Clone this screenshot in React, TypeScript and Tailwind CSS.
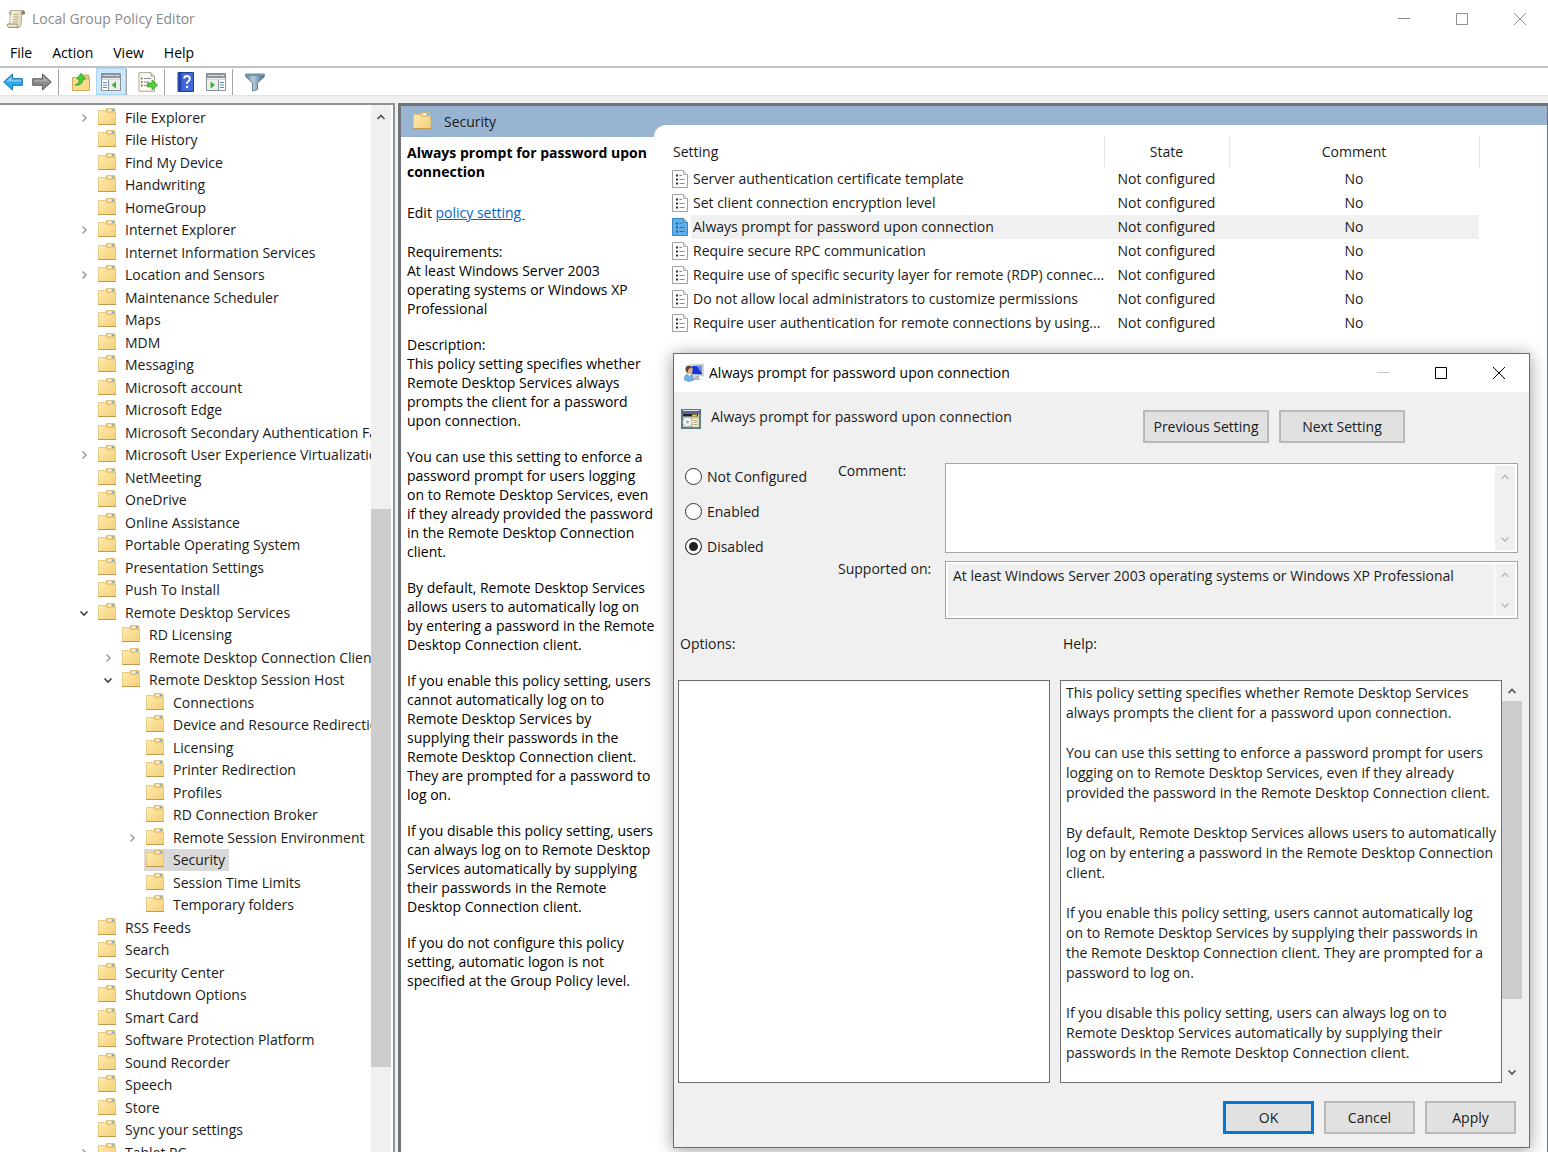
import { ReactNode } from 'react'

type TreeItem = {
  name: string
  level?: number
  state?: 'closed' | 'open'
  selected?: boolean
}

const tree: TreeItem[] = [
  { name: 'File Explorer', state: 'closed' },
  { name: 'File History' },
  { name: 'Find My Device' },
  { name: 'Handwriting' },
  { name: 'HomeGroup' },
  { name: 'Internet Explorer', state: 'closed' },
  { name: 'Internet Information Services' },
  { name: 'Location and Sensors', state: 'closed' },
  { name: 'Maintenance Scheduler' },
  { name: 'Maps' },
  { name: 'MDM' },
  { name: 'Messaging' },
  { name: 'Microsoft account' },
  { name: 'Microsoft Edge' },
  { name: 'Microsoft Secondary Authentication Factor' },
  { name: 'Microsoft User Experience Virtualization', state: 'closed' },
  { name: 'NetMeeting' },
  { name: 'OneDrive' },
  { name: 'Online Assistance' },
  { name: 'Portable Operating System' },
  { name: 'Presentation Settings' },
  { name: 'Push To Install' },
  { name: 'Remote Desktop Services', state: 'open' },
  { name: 'RD Licensing', level: 1 },
  { name: 'Remote Desktop Connection Client', level: 1, state: 'closed' },
  { name: 'Remote Desktop Session Host', level: 1, state: 'open' },
  { name: 'Connections', level: 2 },
  { name: 'Device and Resource Redirection', level: 2 },
  { name: 'Licensing', level: 2 },
  { name: 'Printer Redirection', level: 2 },
  { name: 'Profiles', level: 2 },
  { name: 'RD Connection Broker', level: 2 },
  { name: 'Remote Session Environment', level: 2, state: 'closed' },
  { name: 'Security', level: 2, selected: true },
  { name: 'Session Time Limits', level: 2 },
  { name: 'Temporary folders', level: 2 },
  { name: 'RSS Feeds' },
  { name: 'Search' },
  { name: 'Security Center' },
  { name: 'Shutdown Options' },
  { name: 'Smart Card' },
  { name: 'Software Protection Platform' },
  { name: 'Sound Recorder' },
  { name: 'Speech' },
  { name: 'Store' },
  { name: 'Sync your settings' },
  { name: 'Tablet PC', state: 'closed' },
]

const indent = ['pl-[78px]', 'pl-[102px]', 'pl-[126px]']

const settings = [
  'Server authentication certificate template',
  'Set client connection encryption level',
  'Always prompt for password upon connection',
  'Require secure RPC communication',
  'Require use of specific security layer for remote (RDP) connec...',
  'Do not allow local administrators to customize permissions',
  'Require user authentication for remote connections by using...',
]

const description = [
  `Requirements:
At least Windows Server 2003
operating systems or Windows XP
Professional`,
  `Description:
This policy setting specifies whether
Remote Desktop Services always
prompts the client for a password
upon connection.`,
  `You can use this setting to enforce a
password prompt for users logging
on to Remote Desktop Services, even
if they already provided the password
in the Remote Desktop Connection
client.`,
  `By default, Remote Desktop Services
allows users to automatically log on
by entering a password in the Remote
Desktop Connection client.`,
  `If you enable this policy setting, users
cannot automatically log on to
Remote Desktop Services by
supplying their passwords in the
Remote Desktop Connection client.
They are prompted for a password to
log on.`,
  `If you disable this policy setting, users
can always log on to Remote Desktop
Services automatically by supplying
their passwords in the Remote
Desktop Connection client.`,
  `If you do not configure this policy
setting, automatic logon is not
specified at the Group Policy level.`,
]

const help = [
  `This policy setting specifies whether Remote Desktop Services
always prompts the client for a password upon connection.`,
  `You can use this setting to enforce a password prompt for users
logging on to Remote Desktop Services, even if they already
provided the password in the Remote Desktop Connection client.`,
  `By default, Remote Desktop Services allows users to automatically
log on by entering a password in the Remote Desktop Connection
client.`,
  `If you enable this policy setting, users cannot automatically log
on to Remote Desktop Services by supplying their passwords in
the Remote Desktop Connection client. They are prompted for a
password to log on.`,
  `If you disable this policy setting, users can always log on to
Remote Desktop Services automatically by supplying their
passwords in the Remote Desktop Connection client.`,
]

const Chevron = ({ dir, color = '#505050' }: { dir: 'up' | 'down' | 'right'; color?: string }) => {
  const d = { up: 'M2.500 8 6 4.500 9.500 8', down: 'M2.500 4.500 6 8l3.500-3.500', right: 'M4.500 2.500 8 6l-3.500 3.500' }[dir]
  return (
    <svg className="size-3 shrink-0" viewBox="0 0 12 12" fill="none" stroke={color} strokeWidth="1.6">
      <path d={d} />
    </svg>
  )
}

const Folder = () => (
  <svg className="h-5 w-[18px] shrink-0" viewBox="0 0 18 20">
    <defs>
      <linearGradient id="fold" x1="0" y1="0" x2="1" y2="1">
        <stop offset="0" stopColor="#ffebad" />
        <stop offset="1" stopColor="#f3d07a" />
      </linearGradient>
    </defs>
    <path d="M8 5V1.500Q8 .5 9 .5h7q1 0 1 1V5H8z" fill="#f0cf83" stroke="#d5ae5c" strokeWidth=".7" />
    <path d="M10.500 1.500h5.500v1.600h-5.500z" fill="#fff" />
    <path d="M13.500 1.500h2.500v1.600h-2.500z" fill="#4aa3e6" />
    <path d="M.5 2.500h6.500l2 2.200H17.500V16.500H.5z" fill="url(#fold)" stroke="#e2c071" strokeWidth=".8" />
    <path d="M0 16.500h18" stroke="#b9954c" strokeWidth=".9" />
  </svg>
)

const Scroll = () => (
  <svg className="size-5 shrink-0" viewBox="0 0 20 20">
    <defs>
      <linearGradient id="parch">
        <stop offset="0" stopColor="#fbf6e6" />
        <stop offset="1" stopColor="#ddd0ab" />
      </linearGradient>
    </defs>
    <path d="M5 1.500h12q2 .5 1.500 3.500H16l-1 11q-.5 2.500-3 2.500H3z" fill="url(#parch)" stroke="#aaa18a" strokeWidth=".8" />
    <path d="M5.500 1.500q-2.500.5-2 3.500H5.500" fill="#d8ccab" stroke="#8f8876" strokeWidth=".8" />
    <path d="M4 15H1.500q-1 3 1.500 3.500h9.500q-2-1-1.500-3.500z" fill="#eee3c4" stroke="#8f8876" strokeWidth=".9" />
    <path d="M15.500 5h3q.5-3-1.500-3.500-1.500.5-1.500 3.500z" fill="#8d8672" stroke="#77705e" strokeWidth=".6" />
    <path d="M7.500 5.500h5M7.300 8h5M7 10.500h5M6.700 13h5" stroke="#a8a28f" strokeWidth=".9" />
  </svg>
)

const Arrow = ({ back }: { back?: boolean }) => (
  <svg className="h-[18px] w-5" viewBox="0 0 20 18">
    {back ? (
      <path d="M.7 9 9.500 1v4.700h9.800v6.600H9.500V17z" fill="#2fa8ee" stroke="#1673b5" />
    ) : (
      <path d="M19.300 9 10.500 1v4.700H.7v6.600h9.800V17z" fill="#8b8b8b" stroke="#5f5f5f" />
    )}
    {back ? (
      <path d="M3 8.500 8.700 3.300V6.700h9.500v1.800z" fill="#7dcffa" />
    ) : (
      <path d="M17 8.500l-5.700-5.200V6.700H1.800v1.800z" fill="#a9a9a9" />
    )}
  </svg>
)

const UpFolder = () => (
  <svg className="size-5" viewBox="0 0 20 20">
    <path d="M10 6V4q0-1 1-1h6q1 0 1 1v3" fill="#edcb79" stroke="#c29a45" strokeWidth=".8" />
    <path d="M1.500 5.500h7l1.500 1.500h8.500V18.500h-17z" fill="#f8dc8c" stroke="#c8a352" strokeWidth=".9" />
    <path d="M4 13Q8.500 12 8.500 7H5.800L10 1.200l4.500 5.800H12Q11.500 14 4 13z" fill="#45cf35" stroke="#23901a" strokeWidth=".7" />
  </svg>
)

const PaneIcon = ({ right }: { right?: boolean }) => (
  <svg className="h-[18px] w-5" viewBox="0 0 20 18">
    <path d="M.5.500h19v17H.5z" fill="#fff" stroke="#8a9097" />
    <path d="M1 1h18v4H1z" fill="#8f969d" />
    <path d="M2 2.500h11" stroke="#d3d7db" />
    <path d="M14 2.500h1.500M16.500 2.500H18" stroke="#fff" />
    <path d="M1 6.200h18" stroke="#c8ccd1" strokeWidth="1.200" />
    {right ? (
      <>
        <path d="M1 7h11v10H1z" fill="#eceef0" />
        <path d="M12.500 7v10.500" stroke="#8a9097" />
        <path d="M14 9.500h4M14 12h4M14 14.500h4" stroke="#5a86c2" strokeWidth="1.200" />
        <path d="M4.500 8.500 9 12l-4.500 3.500z" fill="#35b52a" />
      </>
    ) : (
      <>
        <path d="M8 7h11v10H8z" fill="#eceef0" />
        <path d="M7.500 7v10.500" stroke="#8a9097" />
        <path d="M2 9.500h4M2 12h4M2 14.500h4" stroke="#5a86c2" strokeWidth="1.200" />
        <path d="M15 8.500 10.500 12l4.500 3.500z" fill="#35b52a" />
      </>
    )}
  </svg>
)

const ExportIcon = () => (
  <svg className="size-5" viewBox="0 0 20 20">
    <path d="M1 .7h12l3.500 3.500v15H1z" fill="#fbf8ec" stroke="#a09c8c" strokeWidth=".9" />
    <path d="M13 .7v3.500h3.500" fill="#ddd9c8" stroke="#a09c8c" strokeWidth=".8" />
    <path d="M3 6.500h1.500M3 10h1.500M3 13.500h1.500" stroke="#444" strokeWidth="1.300" />
    <path d="M6 6.500h7M6 10h5M6 13.500h4" stroke="#8b8b99" strokeWidth="1.200" />
    <path d="M9.500 11h4.500V8l5.700 5-5.700 5v-3H9.500z" fill="#4fd03b" stroke="#2b9b20" strokeWidth=".7" />
  </svg>
)

const HelpIcon = () => (
  <svg className="size-5" viewBox="0 0 20 20">
    <path d="M2 .500h15.500v19H2z" fill="#4168d6" stroke="#1f3c99" />
    <path d="M2.500 1h3v18h-3z" fill="#2244a6" />
    <path d="M8.200 6.500Q8.200 4 11 4t2.800 2.700Q13.800 8.500 12 9.500q-1 .7-1 2.500" fill="none" stroke="#fff" strokeWidth="1.800" />
    <circle cx="11" cy="15" r="1.200" fill="#fff" />
  </svg>
)

const Funnel = () => (
  <svg className="size-5" viewBox="0 0 20 20">
    <defs>
      <linearGradient id="funnel">
        <stop offset="0" stopColor="#5d7f98" />
        <stop offset=".4" stopColor="#b6cfdf" />
        <stop offset="1" stopColor="#42627a" />
      </linearGradient>
    </defs>
    <path d="M.7 2h18.600v2.500L12.500 11v6.500L7.500 19v-8L.7 4.500z" fill="url(#funnel)" stroke="#506e84" strokeWidth=".8" />
    <path d="M1 2h18v2H1z" fill="#7195af" />
  </svg>
)

const PolicyIcon = ({ selected }: { selected?: boolean }) => (
  <svg className="h-[18px] w-4 shrink-0" viewBox="0 0 16 18">
    <path
      d="M.5.500h11L15.500 4.500v13H.5z"
      fill={selected ? '#62aee6' : '#fdfdfd'}
      stroke={selected ? '#3c86c2' : '#a0a0a0'}
    />
    <path d="M11.500.500v4h4" fill={selected ? '#83c2f0' : '#e6e6e6'} stroke={selected ? '#3c86c2' : '#b0b0b0'} />
    <path d="M4 5.500h2M4 9.500h2M4 13.500h2" stroke={selected ? '#1f5d9c' : '#333'} strokeWidth="2" />
    <path d="M7.500 5.500H10M7.500 9.500h5M7.500 13.500h5" stroke={selected ? '#2c71b0' : '#8a8799'} strokeWidth="1.200" />
  </svg>
)

const UserMonitor = () => (
  <svg className="size-5 shrink-0" viewBox="0 0 20 20">
    <path d="M6.500 1.500 19.500 1v12l-13-.5z" fill="#dcdfdc" stroke="#b9bdb9" strokeWidth=".6" />
    <path d="M8 3l10-.3v8.800L8 11z" fill="#1a35cf" />
    <path d="M12.500 2.800 18 2.700v8z" fill="#6d8cf2" />
    <path d="M11 13h4v2.500l2.500 1.500H10z" fill="#b5bab8" />
    <circle cx="5.200" cy="6.800" r="3.500" fill="#e0ae86" />
    <path d="M1.500 7Q1 2.500 5.200 2.500 7.500 2.500 8 5 4 4.500 3.500 10 2 9.500 1.500 7z" fill="#5f4632" />
    <path d="M.5 17Q0 11 5 10.800q4.800.2 5 6.200Q5 19.800.5 17z" fill="#74b0dc" stroke="#4684b5" strokeWidth=".5" />
    <path d="M4 11l1.500 2.500L7 11z" fill="#fff" />
  </svg>
)

const PolicyBox = () => (
  <svg className="size-5 shrink-0" viewBox="0 0 20 20">
    <path d="M0 0h20v20H0z" fill="#5c7f7f" />
    <path d="M0 1h20v3.500H0z" fill="#56669a" />
    <path d="M2 1.500h16" stroke="#dfe4f2" />
    <path d="M2 5h16V18H2z" fill="#cdd6d1" />
    <path d="M2 5h15v2.500H2z" fill="#222" />
    <path d="M11 5.500h5v2h-5z" fill="#f0c228" />
    <circle cx="6.500" cy="13" r="4.800" fill="#f4f4f4" stroke="#9fa6a6" strokeWidth=".8" />
    <circle cx="6.500" cy="13" r="1.400" fill="#9fa6a6" />
    <path d="M11 9h7v9h-7z" fill="#fffbe0" stroke="#a39a6a" strokeWidth=".7" />
    <path d="M12.500 11.500h4M12.500 13.500h4M12.500 15.500h4" stroke="#8d8766" strokeWidth=".8" />
  </svg>
)

const WindowButtons = ({ color, minColor = color }: { color: string; minColor?: string }) => (
  <div className="flex gap-[34px]">
    <button aria-label="Minimize" className="size-6 flex items-center justify-center">
      <svg className="size-3" viewBox="0 0 12 12" stroke={minColor}>
        <path d="M0 5.500h12" />
      </svg>
    </button>
    <button aria-label="Maximize" className="size-6 flex items-center justify-center">
      <svg className="size-3" viewBox="0 0 12 12" fill="none" stroke={color}>
        <path d="M.5.500h11v11H.5z" />
      </svg>
    </button>
    <button aria-label="Close" className="size-6 flex items-center justify-center">
      <svg className="size-3" viewBox="0 0 12 12" stroke={color}>
        <path d="M0 0l12 12M12 0 0 12" />
      </svg>
    </button>
  </div>
)

const ToolButton = ({ label, active, children }: { label: string; active?: boolean; children: ReactNode }) => (
  <button
    aria-label={label}
    className={
      active
        ? 'h-[27px] w-[30px] flex items-center justify-center border border-[#a8d4f7] bg-[#cce8ff]'
        : 'h-[27px] w-[30px] flex items-center justify-center'
    }
  >
    {children}
  </button>
)

const Divider = () => <div className="h-[26px] w-px bg-[#a5a5a5]" />

const DialogButton = ({ primary, wide, children }: { primary?: boolean; wide?: boolean; children: ReactNode }) => (
  <button
    className={`h-[33px] bg-[#e1e1e1] ${wide ? 'w-[126px]' : 'w-[91px]'} ${
      primary ? 'border-[3px] border-[#0078d7]' : 'border-2 border-[#b9b9b9]'
    }`}
  >
    {children}
  </button>
)

const SmallScroll = () => (
  <div className="w-5 bg-[#f0f0f0] flex flex-col items-center justify-between py-[5px]">
    <Chevron dir="up" color="#bdbdbd" />
    <Chevron dir="down" color="#bdbdbd" />
  </div>
)

const Tree = () => (
  <nav className="w-[395px] shrink-0 flex overflow-hidden border-t-2 border-r-2 border-[#8e9299] bg-white">
    <ul className="flex-1 min-w-0 pt-[1px]">
      {tree.map((t) => (
        <li
          key={t.name}
          className={`odd:h-[23px] even:h-[22px] flex items-center overflow-hidden ${indent[t.level ?? 0]}`}
        >
          <span className="w-3 mr-[6px] shrink-0">
            {t.state && (
              <Chevron
                dir={t.state === 'open' ? 'down' : 'right'}
                color={t.state === 'open' ? '#404040' : '#a0a0a0'}
              />
            )}
          </span>
          <span
            className={`h-full flex items-center gap-[9px] pl-[2px] pr-1 whitespace-nowrap ${
              t.selected ? 'bg-[#d9d9d9]' : ''
            }`}
          >
            <Folder />
            {t.name}
          </span>
        </li>
      ))}
    </ul>
    <div className="w-5 mr-[2px] flex flex-col items-center bg-[#f0f0f0] pt-[6px]">
      <Chevron dir="up" />
      <div className="mt-[386px] h-[558px] w-full bg-[#cdcdcd]" />
    </div>
  </nav>
)

const Description = () => (
  <section className="relative z-10 w-[253px] shrink-0">
    <div className="h-[31px] flex items-center gap-[13px] pl-3 bg-[#99b4d1]">
      <Folder />
      Security
    </div>
    <div className="pt-[6px] pl-[6px] flex flex-col gap-[17px] leading-[19px] whitespace-pre text-black">
      <h2 className="font-bold">{'Always prompt for password upon\nconnection'}</h2>
      <p className="pt-[5px] pb-[3px]">
        Edit{' '}
        <a href="#" className="text-[#0066cc] underline">
          {'policy setting '}
        </a>
      </p>
      {description.map((d) => (
        <p key={d}>{d}</p>
      ))}
    </div>
  </section>
)

const SettingsList = () => (
  <section className="flex-1 min-w-0 flex bg-[#99b4d1] pt-[19px]">
    <div className="flex-1 min-w-0 rounded-tl-[12px] bg-white pl-[18px] pt-3">
      <table className="w-[807px] table-fixed border-collapse">
        <thead>
          <tr className="h-[30px]">
            <th className="w-[432px] p-0 pl-px text-left font-normal border-r border-[#e5e5e5]">Setting</th>
            <th className="w-[125px] p-0 font-normal border-r border-[#e5e5e5]">State</th>
            <th className="w-[250px] p-0 font-normal border-r border-[#e5e5e5]">Comment</th>
          </tr>
        </thead>
        <tbody>
          {settings.map((s, i) => (
            <tr key={s} className="h-6">
              <td className="p-0">
                <div className="flex items-center gap-[3px]">
                  <PolicyIcon selected={i === 2} />
                  <span className={`flex-1 h-6 leading-6 pl-[2px] whitespace-nowrap ${i === 2 ? 'bg-[#f0f0f0]' : ''}`}>
                    {s}
                  </span>
                </div>
              </td>
              <td className={`p-0 text-center ${i === 2 ? 'bg-[#f0f0f0]' : ''}`}>Not configured</td>
              <td className={`p-0 text-center ${i === 2 ? 'bg-[#f0f0f0]' : ''}`}>No</td>
            </tr>
          ))}
        </tbody>
      </table>
    </div>
  </section>
)

const PolicyDialog = () => (
  <div
    role="dialog"
    aria-label="Always prompt for password upon connection"
    className="absolute right-[18px] top-[353px] z-20 w-[857px] border border-[#1883d7] bg-[#f0f0f0] shadow-[0_2px_16px_rgba(0,0,0,0.4)]"
  >
    <div className="h-[38px] flex items-center justify-between bg-white pl-[10px] pr-[18px] text-black">
      <div className="flex items-center gap-[5px]">
        <UserMonitor />
        Always prompt for password upon connection
      </div>
      <WindowButtons color="#000" minColor="#c4c4c4" />
    </div>

    <div className="pt-[15px] pl-[7px] pr-[124px] flex items-start">
      <div className="pt-[2px]">
        <PolicyBox />
      </div>
      <span className="ml-[10px] leading-5">Always prompt for password upon connection</span>
      <div className="ml-auto mt-[3px] flex gap-[10px]">
        <DialogButton wide>Previous Setting</DialogButton>
        <DialogButton wide>Next Setting</DialogButton>
      </div>
    </div>

    <div className="mt-4 pl-[11px] pr-[11px] flex">
      <fieldset className="w-[153px] shrink-0">
        {['Not Configured', 'Enabled', 'Disabled'].map((o) => (
          <label key={o} className="h-[35px] flex items-center gap-[5px]">
            <input
              type="radio"
              name="state"
              defaultChecked={o === 'Disabled'}
              className="appearance-none size-[17px] rounded-full border border-[#333] bg-white checked:bg-[#222] checked:shadow-[inset_0_0_0_3px_#fff]"
            />
            {o}
          </label>
        ))}
      </fieldset>
      <div className="flex-1 pt-1 grid grid-cols-[107px_1fr] gap-y-2">
        <label htmlFor="comment" className="leading-4">
          Comment:
        </label>
        <div className="h-[90px] flex border border-[#a5a5a5] bg-white p-[2px]">
          <textarea id="comment" className="flex-1 resize-none outline-none" />
          <SmallScroll />
        </div>
        <label htmlFor="supported" className="leading-4">
          Supported on:
        </label>
        <div className="h-[58px] flex gap-px border border-[#a5a5a5] bg-white p-[2px]">
          <textarea
            id="supported"
            readOnly
            className="flex-1 resize-none outline-none overflow-hidden bg-[#f0f0f0] pl-[5px] pt-[2px] leading-5"
            defaultValue="At least Windows Server 2003 operating systems or Windows XP Professional"
          />
          <SmallScroll />
        </div>
      </div>
    </div>

    <div className="mt-[15px] pl-1 pr-[7px] flex gap-[10px]">
      <div className="w-[372px] shrink-0">
        <h3 className="pl-[2px] leading-5">Options:</h3>
        <div className="mt-[26px] h-[403px] border border-[#6e6e6e] bg-white" />
      </div>
      <div className="flex-1">
        <h3 className="pl-[3px] leading-5">Help:</h3>
        <div className="mt-[26px] h-[403px] flex">
          <div className="flex-1 flex flex-col gap-5 overflow-hidden border border-[#6e6e6e] bg-white pt-[2px] pl-[5px] leading-5 whitespace-pre">
            {help.map((h) => (
              <p key={h}>{h}</p>
            ))}
          </div>
          <div className="w-5 flex flex-col items-center py-[5px]">
            <Chevron dir="up" />
            <div className="mt-1 h-[298px] w-full bg-[#cdcdcd]" />
            <div className="mt-auto flex">
              <Chevron dir="down" />
            </div>
          </div>
        </div>
      </div>
    </div>

    <div className="mt-[18px] pb-[13px] pr-[13px] flex justify-end gap-[10px]">
      <DialogButton primary>OK</DialogButton>
      <DialogButton>Cancel</DialogButton>
      <DialogButton>Apply</DialogButton>
    </div>
  </div>
)

export default function App() {
  return (
    <div className="relative h-screen flex flex-col overflow-hidden bg-[#f0f0f0] text-[14px] leading-5 text-[#1a1a1a] font-['Open_Sans','Noto_Sans',sans-serif]">
      <header className="bg-white">
        <div className="h-[38px] flex items-center justify-between pl-[6px] pr-4 text-[#8a8a8a]">
          <div className="flex items-center gap-[6px]">
            <Scroll />
            Local Group Policy Editor
          </div>
          <WindowButtons color="#8f8f8f" />
        </div>
        <div className="h-[28px] flex items-center gap-5 pt-[2px] pl-[10px] text-black">
          {['File', 'Action', 'View', 'Help'].map((m) => (
            <button key={m}>{m}</button>
          ))}
        </div>
        <div className="h-[30px] flex items-center border-t-2 border-[#c3c3c7] border-b border-b-[#e3e3e3]">
          <div className="pl-[3px] pr-[6px] flex gap-[9px]">
            <button aria-label="Back">
              <Arrow back />
            </button>
            <button aria-label="Forward">
              <Arrow />
            </button>
          </div>
          <Divider />
          <div className="pl-[7px] flex">
            <ToolButton label="Up one level">
              <UpFolder />
            </ToolButton>
            <ToolButton label="Show console tree" active>
              <PaneIcon />
            </ToolButton>
          </div>
          <Divider />
          <div className="pl-[6px] pr-px">
            <ToolButton label="Export list">
              <ExportIcon />
            </ToolButton>
          </div>
          <Divider />
          <div className="pl-[6px] pr-px flex">
            <ToolButton label="Help">
              <HelpIcon />
            </ToolButton>
            <ToolButton label="Show action pane">
              <PaneIcon right />
            </ToolButton>
          </div>
          <Divider />
          <div className="pl-[7px]">
            <ToolButton label="Filter">
              <Funnel />
            </ToolButton>
          </div>
        </div>
      </header>

      <main className="mt-[7px] flex-1 min-h-0 flex gap-[3px]">
        <Tree />
        <div className="flex-1 min-w-0 flex border-t-[3px] border-l-[3px] border-r border-[#6f7276] bg-white">
          <Description />
          <SettingsList />
        </div>
      </main>

      <PolicyDialog />
    </div>
  )
}
